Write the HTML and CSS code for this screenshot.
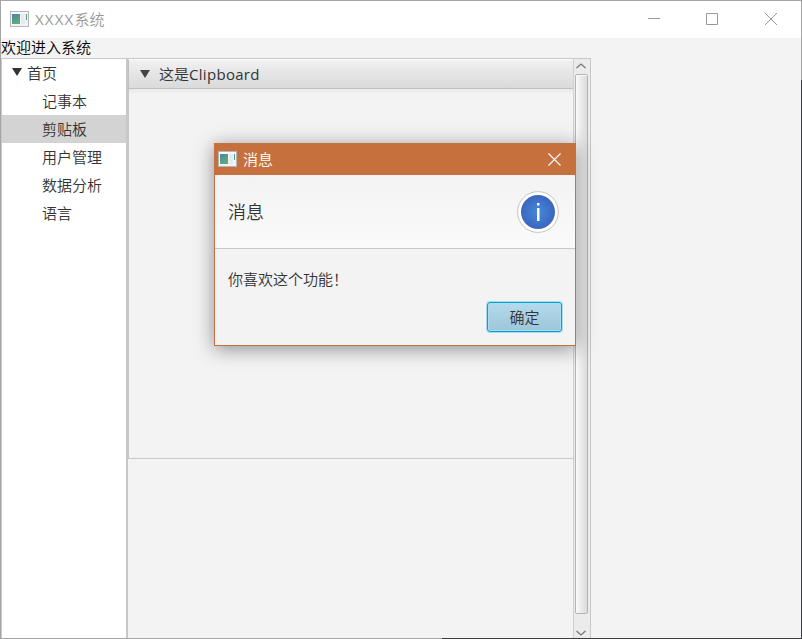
FILE: index.html
```
<!DOCTYPE html>
<html lang="zh-CN">
<head>
    <meta charset="UTF-8">
    <title>XXXX系统</title>
    <link rel="stylesheet" href="styles.css">
</head>
<body>
    <svg width="0" height="0" class="defs">
        <defs>
            <linearGradient id="appFill" x1="0" y1="0" x2="0.5" y2="1">
                <stop offset="0" stop-color="#4c84a8"/>
                <stop offset="1" stop-color="#5cae78"/>
            </linearGradient>
            <radialGradient id="infoFill">
                <stop offset="0" stop-color="#4589dc"/>
                <stop offset="1" stop-color="#3b66be"/>
            </radialGradient>
            <symbol id="appIcon" viewBox="0 0 19 16">
                <rect x="0.5" y="0.5" width="18" height="15" fill="#f1f3f5" stroke="#b3b7bb"/>
                <rect x="1" y="1" width="17" height="2" fill="#fafafa"/>
                <rect x="2" y="3" width="8" height="10" fill="url(#appFill)"/>
                <rect x="11" y="3" width="4" height="10" fill="#e8ebee"/>
                <rect x="16" y="3" width="1" height="6" fill="#5aa07f"/>
            </symbol>
        </defs>
    </svg>
    <div class="window">
        <div class="titlebar">
            <svg class="app-icon"><use href="#appIcon"/></svg>
            <span class="title"><span class="latin wide">XXXX</span>系统</span>
            <svg class="controls" width="130" height="14" fill="none" stroke="#999">
                <path d="M0 6.5h12M58.500 1.500h11v11h-11zM117 1l12 12M129 1l-12 12"/>
            </svg>
        </div>
        <div class="welcome">欢迎进入系统</div>
        <div class="main">
            <ul class="tree">
                <li class="root"><i class="arrow"></i>首页</li>
                <li>记事本</li>
                <li class="selected">剪贴板</li>
                <li>用户管理</li>
                <li>数据分析</li>
                <li>语言</li>
            </ul>
            <div class="scroll-pane">
                <div class="titled-pane">
                    <div class="pane-title"><i class="arrow"></i><div class="pane-text">这是<span class="latin">Clipboard</span></div></div>
                    <div class="pane-content"></div>
                </div>
                <div class="scrollbar">
                    <svg width="10" height="6"><path d="M0.500 5L5 1l4.500 4"/></svg>
                    <div class="thumb"></div>
                    <svg width="10" height="6"><path d="M0.500 1L5 5l4.500-4"/></svg>
                </div>
            </div>
        </div>
    </div>

    <div class="dialog">
        <div class="dialog-bar">
            <svg class="app-icon"><use href="#appIcon"/></svg>
            <span>消息</span>
            <svg class="close" width="13" height="13"><path d="M0.500 0.500l12 12M12.500 0.500l-12 12" stroke="#fff" stroke-width="1.100"/></svg>
        </div>
        <div class="dialog-header">
            <span>消息</span>
            <svg width="42" height="42">
                <circle cx="21" cy="21" r="20.400" fill="#fff" stroke="#c6c6c6"/>
                <circle cx="21" cy="21" r="17" fill="url(#infoFill)"/>
                <path d="M20 12h2.500v2.500h-2.500zM20 17h2.500v13h-2.500z" fill="#fff"/>
            </svg>
        </div>
        <div class="dialog-content">你喜欢这个功能！</div>
        <div class="dialog-buttons"><button>确定</button></div>
    </div>
</body>
</html>
```
FILE: styles.css
```
* {
    box-sizing: border-box;
}
body {
    margin: 0;
    overflow: hidden;
    font-family: "Open Sans", "Noto Sans CJK SC", sans-serif;
    font-size: 15px;
    font-weight: 350;
    color: #333;
}
.defs {
    position: absolute;
}
.window {
    display: flex;
    flex-direction: column;
    width: 802px;
    height: 639px;
    padding: 1px;
    background:
        linear-gradient(#a5a5a5, #a5a5a5) top / 100% 1px no-repeat,
        linear-gradient(#a5a5a5, #a5a5a5) left / 1px 100% no-repeat,
        linear-gradient(#a5a5a5 80px, #3c3d40 80px) right / 1px 100% no-repeat,
        linear-gradient(90deg, #a5a5a5 442px, #3c3d40 442px) bottom / 100% 1px no-repeat,
        #f3f3f3;
}
.titlebar {
    display: flex;
    align-items: center;
    height: 37px;
    padding: 0 23px 0 9px;
    background: #fff;
    color: #999;
}
.app-icon {
    width: 19px;
    height: 16px;
}
.titlebar .app-icon {
    margin-top: -2px;
}
.title {
    margin: -3px 0 0 6px;
}
.latin {
    font-weight: 400;
    letter-spacing: 0.3px;
}
.wide {
    letter-spacing: 1.2px;
}
.controls {
    margin: -2px 0 0 auto;
}
.welcome {
    height: 20px;
    line-height: 18px;
    color: #000;
}
.main {
    display: flex;
    flex: 1;
}
.tree {
    width: 126px;
    margin: 0;
    padding: 0;
    list-style: none;
    background: #fff;
    border: 1px solid #c8c8c8;
    border-bottom: none;
}
.tree li {
    height: 28px;
    line-height: 28px;
    padding-left: 40px;
}
.tree .root {
    display: flex;
    padding-left: 10px;
}
.tree .selected {
    background: #d3d3d3;
}
.arrow {
    width: 0;
    height: 0;
    border: 5.5px solid transparent;
    border-top: 8px solid #444;
    border-bottom: none;
}
.root .arrow {
    margin: 9px 5px 0 0;
    border-top-color: #333;
}
.scroll-pane {
    display: flex;
    width: 464px;
    border: 1px solid #c8c8c8;
    border-bottom: none;
}
.titled-pane {
    width: 445px;
    height: 400px;
}
.pane-title {
    display: flex;
    align-items: center;
    height: 30px;
    padding-left: 11px;
    background: linear-gradient(#f1f1f1, #dadada);
    border: 1px solid #c0c0c0;
    border-top-color: #fafafa;
    border-right: none;
}
.pane-text {
    margin: -2px 0 0 9px;
}
.pane-content {
    height: 370px;
    border: 1px solid #c8c8c8;
    border-top: none;
    border-right: none;
    background: linear-gradient(#e9e9e9, #f3f3f3 5px);
}
.scrollbar {
    display: flex;
    flex-direction: column;
    align-items: center;
    width: 17px;
    padding: 4px 2px 0 0;
    background: #ebebeb;
    border-left: 1px solid #d0d0d0;
}
.scrollbar svg {
    fill: none;
    stroke: #777;
    stroke-width: 1.3;
}
.thumb {
    width: 13px;
    height: 540px;
    margin: 5px 0 16px;
    border: 1px solid #b4b4b4;
    border-radius: 2px;
    background: linear-gradient(90deg, #f7f7f7, #dcdcdc);
    box-shadow: inset 1px 1px #fafafa;
}
.dialog {
    position: absolute;
    left: 214px;
    top: 143px;
    width: 362px;
    height: 203px;
    background: #f3f3f3;
    border: 1px solid #c6713d;
    box-shadow: 0 3px 18px rgba(0, 0, 0, 0.42);
}
.dialog-bar {
    display: flex;
    align-items: center;
    height: 31px;
    padding: 0 14px 1px 3px;
    background: #c6713d;
    color: #fff;
}
.dialog-bar span {
    margin: -1px 0 0 6px;
}
.close {
    margin-left: auto;
}
.dialog-header {
    display: flex;
    align-items: center;
    justify-content: space-between;
    height: 74px;
    padding: 0 16px 0 13px;
    font-size: 18px;
    background: linear-gradient(#f3f3f3, #fafafa);
    border-bottom: 1px solid #c8c8c8;
}
.dialog-header span {
    margin-top: -2px;
}
.dialog-content {
    height: 53px;
    padding: 19px 13px 0;
    line-height: 22px;
}
.dialog-buttons {
    display: flex;
    justify-content: flex-end;
    padding-right: 13px;
}
button {
    width: 75px;
    height: 30px;
    padding: 0 0 2px;
    font: inherit;
    color: #333;
    background: linear-gradient(#b3dbeb, #9dc6da);
    border: 1px solid #039ed3;
    border-radius: 3px;
    box-shadow: 0 0 0 1px #a9dcef, inset 0 0 0 1px #aedbed;
}
```
